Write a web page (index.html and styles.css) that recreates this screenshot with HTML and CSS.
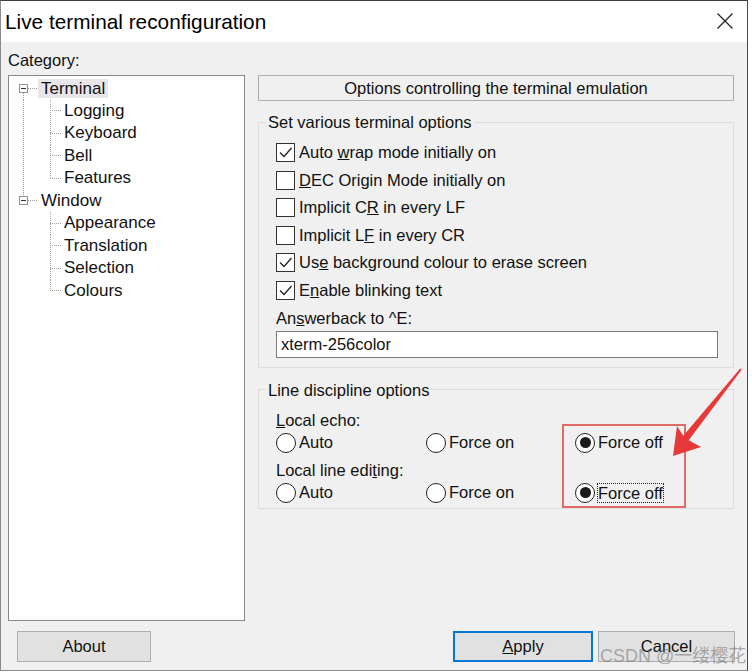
FILE: index.html
```html
<!DOCTYPE html>
<html>
<head>
<meta charset="utf-8">
<link rel="stylesheet" href="styles.css">
</head>
<body>
<div class="window">
  <div class="titlebar">
    <span class="title">Live terminal reconfiguration</span>
    <svg class="close" width="16" height="16" viewBox="0 0 16 16"><path d="M0.5 0.5 L15.5 15.5 M15.5 0.5 L0.5 15.5" stroke="#222" stroke-width="1.3" fill="none"/></svg>
  </div>
  <div class="client">
    <div class="main">
      <div class="left">
        <div class="cat-label">Cate<u>g</u>ory:</div>
        <div class="tree">
          <div class="node node-first"><span class="exp"></span><span class="label sel">Terminal</span></div>
          <div class="branch">
            <div class="leaf">Logging</div>
            <div class="leaf">Keyboard</div>
            <div class="leaf">Bell</div>
            <div class="leaf last">Features</div>
          </div>
          <div class="node node-last"><span class="exp"></span><span class="label">Window</span></div>
          <div class="leaves">
            <div class="leaf">Appearance</div>
            <div class="leaf">Translation</div>
            <div class="leaf">Selection</div>
            <div class="leaf last">Colours</div>
          </div>
        </div>
      </div>
      <div class="right">
        <div class="header">Options controlling the terminal emulation</div>
        <fieldset class="group g1">
          <legend>Set various terminal options</legend>
          <div class="opt"><span class="cb on"><svg width="17" height="17" viewBox="0 0 17 17"><path d="M3 8.5 L7 12.5 L14.5 4" stroke="#222" stroke-width="1.3" fill="none"/></svg></span><span>Auto <u>w</u>rap mode initially on</span></div>
          <div class="opt"><span class="cb"></span><span><u>D</u>EC Origin Mode initially on</span></div>
          <div class="opt"><span class="cb"></span><span>Implicit C<u>R</u> in every LF</span></div>
          <div class="opt"><span class="cb"></span><span>Implicit L<u>F</u> in every CR</span></div>
          <div class="opt"><span class="cb on"><svg width="17" height="17" viewBox="0 0 17 17"><path d="M3 8.5 L7 12.5 L14.5 4" stroke="#222" stroke-width="1.3" fill="none"/></svg></span><span>Us<u>e</u> background colour to erase screen</span></div>
          <div class="opt"><span class="cb on"><svg width="17" height="17" viewBox="0 0 17 17"><path d="M3 8.5 L7 12.5 L14.5 4" stroke="#222" stroke-width="1.3" fill="none"/></svg></span><span>E<u>n</u>able blinking text</span></div>
          <div class="ans-label">An<u>s</u>werback to ^E:</div>
          <div class="field">xterm-256color</div>
        </fieldset>
        <fieldset class="group g2">
          <legend>Line discipline options</legend>
          <div class="sub-label"><u>L</u>ocal echo:</div>
          <div class="radios">
            <div class="rad"><span class="rb"></span><span>Auto</span></div>
            <div class="rad"><span class="rb"></span><span>Force on</span></div>
            <div class="rad"><span class="rb on"></span><span>Force off</span></div>
          </div>
          <div class="sub-label second">Local line edi<u>t</u>ing:</div>
          <div class="radios">
            <div class="rad"><span class="rb"></span><span>Auto</span></div>
            <div class="rad"><span class="rb"></span><span>Force on</span></div>
            <div class="rad"><span class="rb on"></span><span class="focus">Force off</span></div>
          </div>
        </fieldset>
      </div>
    </div>
    <div class="buttons">
      <div class="btn about">About</div>
      <div class="spacer"></div>
      <div class="btn apply"><u>A</u>pply</div>
      <div class="btn cancel">Cancel</div>
    </div>
  </div>
  <div class="highlight-box"></div>
  <svg class="arrow" width="752" height="672" viewBox="0 0 752 672"><polygon points="673,456 677,426 683.3,435.8 740.2,368.4 741.8,369.6 688.7,440.2 701,447" fill="#e8393a"/></svg>
  <div class="watermark">CSDN @一缕樱花</div>
</div>
</body>
</html>
```

FILE: styles.css
```css
* { box-sizing: border-box; }
body {
  margin: 0;
  background: #fff;
  font-family: "Liberation Sans", Arial, "Noto Sans CJK SC", sans-serif;
  font-size: 16.5px;
  color: #111;
}
.window {
  position: relative;
  width: 748px;
  height: 671px;
  border: 1px solid #8a8a8a;
  border-top-color: #3a3a3a;
  border-right-color: #4a4a4a;
  display: flex;
  flex-direction: column;
  overflow: hidden;
}
.titlebar {
  height: 41px;
  flex: none;
  background: #fff;
  display: flex;
  align-items: center;
  padding-left: 4px;
  padding-right: 14px;
}
.title {
  font-size: 20.8px;
  color: #000;
}
.close { margin-left: auto; margin-top: -2px; }
.client {
  flex: 1;
  background: #f0f0f0;
  padding: 0 12px 0 7px;
  display: flex;
  flex-direction: column;
}
.main { display: flex; gap: 13px; }
.left { width: 237px; }
.cat-label { margin-top: 8px; height: 20px; line-height: 20px; margin-bottom: 5px; }
.tree {
  height: 546px;
  background: #fff;
  border: 1px solid #828790;
  padding-top: 1px;
  font-size: 17px;
}
.node, .leaf {
  height: 22.5px;
  display: flex;
  align-items: center;
  background-repeat: no-repeat;
}
.node {
  padding-left: 10px;
  background-image:
    repeating-linear-gradient(to right, #a0a0a0 0 1px, transparent 1px 2px),
    repeating-linear-gradient(to bottom, #a0a0a0 0 1px, transparent 1px 2px);
  background-size: 10px 1px, 1px 7px;
}
.node-first { background-position: 19px 50%, 14px 100%; }
.node-last { background-position: 19px 50%, 14px 0; }
.exp {
  width: 9px; height: 9px;
  border: 1px solid #919191;
  background: #fff linear-gradient(#333, #333) center / 5px 1px no-repeat;
  flex: none;
}
.label { margin-left: 10px; padding: 0 3px; line-height: 19px; }
.label.sel { background: #e8e6ea; }
.branch {
  background: repeating-linear-gradient(to bottom, #a0a0a0 0 1px, transparent 1px 2px) 14px 0 / 1px 100% no-repeat;
}
.leaf {
  padding-left: 55px;
  background-image:
    repeating-linear-gradient(to bottom, #a0a0a0 0 1px, transparent 1px 2px),
    repeating-linear-gradient(to right, #a0a0a0 0 1px, transparent 1px 2px);
  background-position: 41px 0, 41px 50%;
  background-size: 1px 100%, 12px 1px;
}
.leaf.last { background-size: 1px 50%, 12px 1px; }
.right { width: 476px; padding-top: 33px; }
.header {
  height: 26px;
  border: 1px solid #adadad;
  background: #f0f0f0;
  text-align: center;
  line-height: 24px;
}
.group {
  margin: 11px 0 0 0;
  border: 1px solid #dcdcdc;
  padding: 0 0 0 17px;
  min-width: 0;
}
.group legend {
  margin-left: -10px;
  padding: 0 2px;
  line-height: 20px;
  height: 20px;
}
.g1 { padding-top: 7px; padding-bottom: 9px; }
.opt { height: 27.5px; display: flex; align-items: center; gap: 4px; }
.cb {
  width: 19px; height: 19px;
  border: 1px solid #333;
  background: #fff;
  flex: none;
  display: flex;
}
.ans-label { margin-top: 3.75px; line-height: 20px; height: 20px; }
.field {
  margin-top: 3px;
  height: 27px;
  width: 442px;
  border: 1px solid #7a7a7a;
  background: #fff;
  padding-left: 4px;
  line-height: 25px;
}
.g2 { margin-top: 12px; padding-top: 10px; padding-bottom: 3px; }
.sub-label { line-height: 20px; height: 20px; }
.sub-label.second { margin-top: 5px; }
.radios { display: grid; grid-template-columns: 150px 149px auto; height: 24px; margin-top: 1px; }
.rad { display: flex; align-items: center; gap: 3px; }
.rb {
  width: 20px; height: 20px;
  border: 1.2px solid #222;
  border-radius: 50%;
  background: #fff;
  flex: none;
  display: flex;
  align-items: center;
  justify-content: center;
}
.rb.on::after {
  content: "";
  width: 11px; height: 11px;
  border-radius: 50%;
  background: #1a1a1a;
}
.focus { outline: 1px dotted #222; outline-offset: 0; line-height: 18px; }
.buttons {
  margin-top: 10px;
  height: 31px;
  display: flex;
  padding-left: 9px;
  gap: 5px;
}
.spacer { flex: 1; }
.btn {
  height: 31px;
  border: 1px solid #adadad;
  background: #e1e1e1;
  display: flex;
  align-items: center;
  justify-content: center;
}
.about { width: 134px; }
.apply { width: 140px; border: 2px solid #0078d7; }
.cancel { width: 137px; }
.highlight-box {
  position: absolute;
  left: 561px; top: 423px;
  width: 124px; height: 84px;
  border: 2px solid #d9534f;
  opacity: 0.85;
}
.arrow { position: absolute; left: -1px; top: -1px; pointer-events: none; }
.watermark {
  position: absolute;
  left: 599px; top: 643px;
  font-size: 18px;
  line-height: 24px;
  color: rgba(110, 110, 110, 0.55);
  font-family: "Liberation Sans", "Noto Sans CJK SC", sans-serif;
  white-space: nowrap;
}
```
